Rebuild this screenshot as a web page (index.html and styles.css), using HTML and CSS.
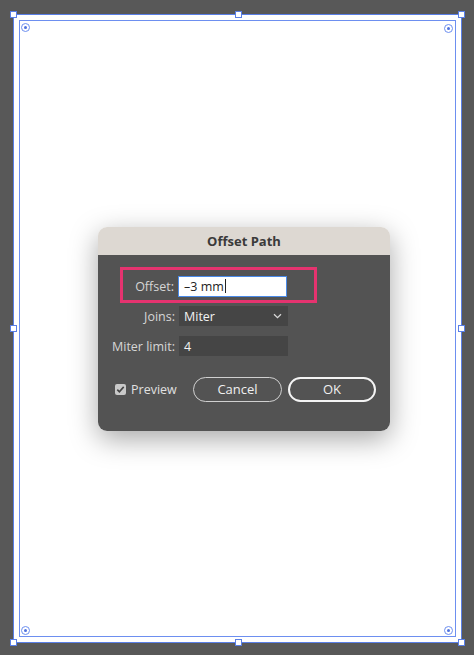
FILE: index.html
```html
<!DOCTYPE html>
<html lang="en">
<head>
  <meta charset="UTF-8">
  <meta name="viewport" content="width=device-width, initial-scale=1.0">
  <title>Offset Path</title>
  <link rel="stylesheet" href="styles.css">
</head>
<body>
  <div class="page">
    <div class="margin-line"></div>
    <span class="handle h-tl"></span>
    <span class="handle h-tc"></span>
    <span class="handle h-tr"></span>
    <span class="handle h-ml"></span>
    <span class="handle h-mr"></span>
    <span class="handle h-bl"></span>
    <span class="handle h-bc"></span>
    <span class="handle h-br"></span>
    <span class="target t-tl"></span>
    <span class="target t-tr"></span>
    <span class="target t-bl"></span>
    <span class="target t-br"></span>

    <div class="dialog">
      <div class="dialog-title">Offset Path</div>
      <div class="dialog-body">
        <div class="highlight-box">
          <div class="row row-boxed">
            <label class="label">Offset:</label>
            <div class="field field-active">–3 mm<span class="caret"></span></div>
          </div>
        </div>
        <div class="row row-joins">
          <label class="label">Joins:</label>
          <div class="field field-dark select">
            Miter
            <svg class="chevron" width="9" height="6" viewBox="0 0 9 6"><path d="M1 1.2 L4.5 4.6 L8 1.2" fill="none" stroke="#d8d8d8" stroke-width="1.3"/></svg>
          </div>
        </div>
        <div class="row row-miter">
          <label class="label">Miter limit:</label>
          <div class="field field-dark">4</div>
        </div>
        <div class="footer">
          <div class="preview">
            <span class="checkbox">
              <svg width="11" height="11" viewBox="0 0 11 11"><path d="M2.3 5.6 L4.4 7.8 L8.7 2.9" fill="none" stroke="#444" stroke-width="1.6"/></svg>
            </span>
            Preview
          </div>
          <button class="btn btn-cancel">Cancel</button>
          <button class="btn btn-ok">OK</button>
        </div>
      </div>
    </div>
  </div>
</body>
</html>
```

FILE: styles.css
```css
body {
  margin: 0;
  padding: 14px 12px 12px 13px;
  background: #585858;
  font-family: 'Open Sans', 'Liberation Sans', sans-serif;
}
.page {
  position: relative;
  box-sizing: border-box;
  width: 449px;
  height: 629px;
  background: #fff;
  border: 1px solid #5a7fe6;
  display: flex;
  align-items: center;
  justify-content: center;
  padding-left: 13px;
}
.margin-line {
  position: absolute;
  top: 5px;
  left: 5px;
  right: 5px;
  bottom: 5px;
  border: 1px solid #6d8ff0;
}
.handle {
  position: absolute;
  width: 5px;
  height: 5px;
  background: #fff;
  border: 1px solid #5a7fe6;
  margin: -4px 0 0 -4px;
}
.h-tl { left: 0; top: 0; }
.h-tc { left: 225px; top: 0; }
.h-tr { left: 448px; top: 0; }
.h-ml { left: 0; top: 314px; }
.h-mr { left: 448px; top: 314px; }
.h-bl { left: 0; top: 628px; }
.h-bc { left: 225px; top: 628px; }
.h-br { left: 448px; top: 628px; }
.target {
  position: absolute;
  width: 7px;
  height: 7px;
  border: 1px solid #6d8ff0;
  border-radius: 50%;
  margin: -5px 0 0 -5px;
}
.target::after {
  content: '';
  position: absolute;
  left: 2px;
  top: 2px;
  width: 3px;
  height: 3px;
  border-radius: 50%;
  background: #4f72de;
}
.t-tl { left: 12px; top: 13px; }
.t-tr { left: 435px; top: 14px; }
.t-bl { left: 12px; top: 616px; }
.t-br { left: 435px; top: 616px; }

.dialog {
  width: 292px;
  border-radius: 9px;
  overflow: hidden;
  box-shadow: 0 8px 28px rgba(0,0,0,0.35);
}
.dialog-title {
  height: 28px;
  line-height: 28px;
  background: #ddd8d2;
  color: #3a3a3a;
  text-align: center;
  font-weight: bold;
  font-size: 13px;
}
.dialog-body {
  background: #535353;
  padding: 12px 0 29px;
}
.highlight-box {
  margin-left: 22px;
  width: 191px;
  border: 3px solid #e5336f;
  padding: 6px 0 3px;
  box-sizing: content-box;
  height: 21px;
}
.row {
  display: flex;
  align-items: center;
  gap: 4px;
  height: 21px;
}
.label {
  width: 77px;
  text-align: right;
  color: #d6d6d6;
  font-size: 12.5px;
}
.row-boxed .label {
  width: 51px;
}
.field {
  box-sizing: border-box;
  width: 109px;
  height: 21px;
  padding: 0 5px;
  font-size: 12.5px;
  display: flex;
  align-items: center;
}
.field-active {
  background: #fff;
  border: 1px solid #4a8ae8;
  color: #222;
}
.caret {
  width: 1px;
  height: 14px;
  background: #222;
  margin-left: 1px;
}
.field-dark {
  background: #454545;
  color: #f2f2f2;
  height: 20px;
}
.select {
  justify-content: space-between;
  padding-right: 6px;
}
.chevron {
  display: block;
}
.row-joins {
  margin-top: 3px;
}
.row-miter {
  margin-top: 9px;
}
.footer {
  display: flex;
  align-items: center;
  margin-top: 20px;
  padding-left: 17px;
}
.preview {
  display: flex;
  align-items: center;
  gap: 5px;
  color: #e0e0e0;
  font-size: 12.5px;
  width: 78px;
}
.checkbox {
  width: 11px;
  height: 11px;
  border-radius: 2px;
  background: #c9c9c9;
  display: flex;
}
.btn {
  box-sizing: border-box;
  height: 25px;
  border-radius: 13px;
  background: transparent;
  color: #f0f0f0;
  font-family: inherit;
  font-size: 13px;
  padding: 0;
  cursor: pointer;
}
.btn-cancel {
  width: 89px;
  border: 1.5px solid #d0d0d0;
}
.btn-ok {
  width: 88px;
  margin-left: 6px;
  border: 2px solid #f4f4f4;
}
```
